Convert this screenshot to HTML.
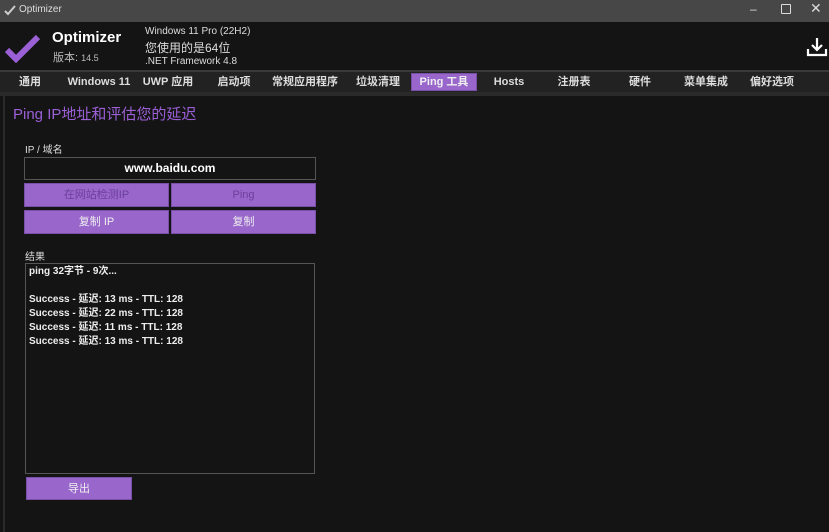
<!DOCTYPE html>
<html><head><meta charset="utf-8"><style>
*{margin:0;padding:0;box-sizing:border-box}
body{width:829px;height:532px;background:#141414;font-family:"Liberation Sans","Noto Sans CJK SC",sans-serif;color:#eee;position:relative;overflow:hidden}
.a{position:absolute}
.tb{left:0;top:0;width:829px;height:22px;background:#474747}
.btn{position:absolute;background:#9966cc;border:1px solid #7a4fa8;color:#eee;font-size:11px;text-align:center;line-height:22px}
.tab{position:absolute;top:72px;height:20px;line-height:20px;font-size:11px;font-weight:bold;color:#ddd;text-align:center}
.res div{font-size:10px;font-weight:bold;line-height:14px;height:14px}
</style></head><body>
<div class="a tb"></div>
<svg class="a" style="left:3px;top:3px" width="14" height="14" viewBox="0 0 14 14"><path d="M2 8l3 3 7-8" stroke="#ccc" stroke-width="2" fill="none"/></svg>
<div class="a" style="left:19px;top:4px;font-size:10px;color:#ddd">Optimizer</div>
<div class="a" style="left:750px;top:2px;font-size:12px;color:#ddd">–</div>
<div class="a" style="left:781px;top:4px;width:10px;height:10px;border:1px solid #ddd;border-radius:1px"></div>
<div class="a" style="left:810px;top:0px;font-size:14px;color:#ddd">✕</div>
<svg class="a" style="left:4px;top:33px" width="36" height="30" viewBox="0 0 36 30"><path d="M3 17l9 9L34 4" stroke="#9b5fd6" stroke-width="6" fill="none"/></svg>
<div class="a" style="left:52px;top:29px;font-size:15px;font-weight:bold;color:#fff">Optimizer</div>
<div class="a" style="left:53px;top:49px;font-size:11px;color:#bbb">版本: <span style="font-size:9px">14.5</span></div>
<div class="a" style="left:145px;top:26px;font-size:10px;color:#ddd">Windows 11 Pro (22H2)</div>
<div class="a" style="left:145px;top:39px;font-size:12px;color:#ddd">您使用的是64位</div>
<div class="a" style="left:145px;top:56px;font-size:10px;color:#ddd">.NET Framework 4.8</div>
<svg class="a" style="left:806px;top:36px" width="22" height="22" viewBox="0 0 22 22"><path d="M11 2v12M6 9l5 5 5-5M2 13v6h18v-6" stroke="#fff" stroke-width="2.2" fill="none"/></svg>
<div class="a" style="left:0;top:70px;width:829px;height:2px;background:#3a3a3a"></div>
<div class="a" style="left:0;top:72px;width:829px;height:20px;background:#222"></div>
<div class="a" style="left:0;top:92px;width:829px;height:4px;background:#2a2a2a"></div>
<div class="tab" style="left:10px;width:40px">通用</div>
<div class="tab" style="left:64px;width:70px">Windows 11</div>
<div class="tab" style="left:140px;width:56px">UWP 应用</div>
<div class="tab" style="left:208px;width:52px">启动项</div>
<div class="tab" style="left:268px;width:74px">常规应用程序</div>
<div class="tab" style="left:350px;width:56px">垃圾清理</div>
<div class="tab" style="left:411px;width:66px;background:#9966cc;border:1px solid #7a4fa8;top:73px;height:18px;line-height:16px;color:#eee">Ping 工具</div>
<div class="tab" style="left:486px;width:46px">Hosts</div>
<div class="tab" style="left:550px;width:48px">注册表</div>
<div class="tab" style="left:620px;width:40px">硬件</div>
<div class="tab" style="left:678px;width:56px">菜单集成</div>
<div class="tab" style="left:744px;width:56px">偏好选项</div>
<div class="a" style="left:3px;top:96px;width:2px;height:436px;background:#2a2a2a"></div>
<div class="a" style="left:13px;top:103px;font-size:15px;color:#9b5fd6">Ping IP地址和评估您的延迟</div>
<div class="a" style="left:25px;top:141px;font-size:10px;color:#ddd">IP / 域名</div>
<div class="a" style="left:24px;top:157px;width:292px;height:23px;border:1px solid #555;background:#141414;text-align:center;font-size:12px;font-weight:bold;line-height:21px;color:#fff">www.baidu.com</div>
<div class="btn" style="left:24px;top:183px;width:145px;height:24px;color:#6a3f99">在网站检测IP</div>
<div class="btn" style="left:171px;top:183px;width:145px;height:24px;color:#6a3f99">Ping</div>
<div class="btn" style="left:24px;top:210px;width:145px;height:24px">复制 IP</div>
<div class="btn" style="left:171px;top:210px;width:145px;height:24px">复制</div>
<div class="a" style="left:25px;top:248px;font-size:10px;color:#ddd">结果</div>
<div class="a res" style="left:25px;top:263px;width:290px;height:211px;border:1px solid #555;padding:1px 3px">
<div>ping 32字节 - 9次...</div><div></div>
<div>Success - 延迟: 13 ms - TTL: 128</div>
<div>Success - 延迟: 22 ms - TTL: 128</div>
<div>Success - 延迟: 11 ms - TTL: 128</div>
<div>Success - 延迟: 13 ms - TTL: 128</div>
</div>
<div class="btn" style="left:26px;top:477px;width:106px;height:23px">导出</div>
</body></html>
